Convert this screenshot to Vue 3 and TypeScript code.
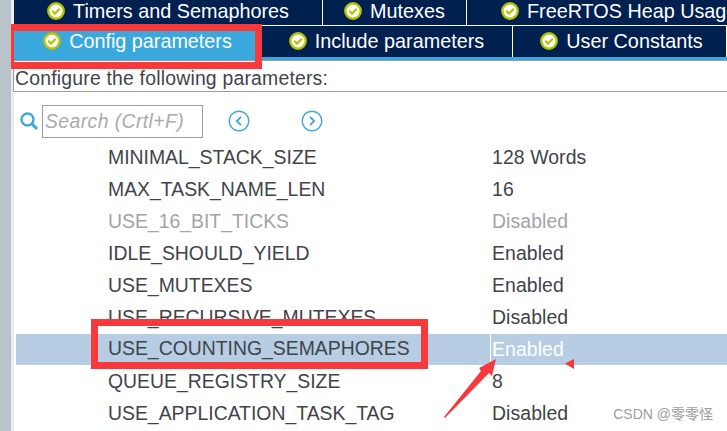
<template>
  <div class="page">
    <div class="content">
      <div class="tabs">
        <div v-for="(row, i) in tabRows" :key="i" class="tab-row" :class="'tab-row-' + i">
          <div
            v-for="tab in row"
            :key="tab.label"
            class="tab"
            :class="{ active: tab.active }"
            :style="{ width: tab.width + 'px' }"
          >
            <svg class="check" width="18" height="18" viewBox="0 0 18 18">
              <circle cx="9" cy="9" r="7.7" fill="#fff" stroke="#b4c400" stroke-width="2.4" />
              <path d="M5.2 8.8 8 11.6 12.8 6.8" fill="none" stroke="#b4c400" stroke-width="2.2" />
            </svg>
            <span class="tab-label">{{ tab.label }}</span>
          </div>
        </div>
      </div>
      <div class="tab-bar"></div>
      <div class="configure">Configure the following parameters:</div>
      <div class="search-row">
        <svg class="search-icon" width="20" height="20" viewBox="0 0 20 20">
          <circle cx="8.5" cy="8.5" r="6" fill="none" stroke="#3fa6d8" stroke-width="2.4" />
          <path d="M13 13 18 18" fill="none" stroke="#3fa6d8" stroke-width="3" />
        </svg>
        <div class="search-box">Search (Crtl+F)</div>
        <svg class="nav nav-prev" width="22" height="22" viewBox="0 0 22 22">
          <circle cx="11" cy="11" r="9.8" fill="none" stroke="#3fa6d8" stroke-width="1.4" />
          <path d="M13 6.8 8.8 11 13 15.2" fill="none" stroke="#3fa6d8" stroke-width="1.8" />
        </svg>
        <svg class="nav nav-next" width="22" height="22" viewBox="0 0 22 22">
          <circle cx="11" cy="11" r="9.8" fill="none" stroke="#3fa6d8" stroke-width="1.4" />
          <path d="M9 6.8 13.2 11 9 15.2" fill="none" stroke="#3fa6d8" stroke-width="1.8" />
        </svg>
      </div>
      <div class="params">
        <div
          v-for="p in params"
          :key="p.name"
          class="param"
          :class="{ muted: p.muted, selected: p.selected }"
        >
          <div class="param-name">{{ p.name }}</div>
          <div class="param-value">{{ p.value }}</div>
        </div>
      </div>
    </div>

    <!-- annotations drawn on top of the screenshot -->
    <div class="mark mark-tab"></div>
    <div class="mark mark-row"></div>
    <svg class="arrow" width="727" height="431" viewBox="0 0 727 431">
      <path d="M444 417 481 371 479 368 496 359 492 376 489 373 445 418Z" fill="#f8393c" />
      <path d="M565 363.500 574 359 574 369Z" fill="#f8393c" />
    </svg>
    <div class="watermark">CSDN @零零怪</div>
  </div>
</template>

<script setup lang="ts">
interface Tab {
  label: string
  width: number
  active?: boolean
}

interface Param {
  name: string
  value: string
  muted?: boolean
  selected?: boolean
}

const tabRows: Tab[][] = [
  [
    { label: 'Timers and Semaphores', width: 309 },
    { label: 'Mutexes', width: 144 },
    { label: 'FreeRTOS Heap Usage', width: 260 },
  ],
  [
    { label: 'Config parameters', width: 241, active: true },
    { label: 'Include parameters', width: 258 },
    { label: 'User Constants', width: 214 },
  ],
]

const params: Param[] = [
  { name: 'MINIMAL_STACK_SIZE', value: '128 Words' },
  { name: 'MAX_TASK_NAME_LEN', value: '16' },
  { name: 'USE_16_BIT_TICKS', value: 'Disabled', muted: true },
  { name: 'IDLE_SHOULD_YIELD', value: 'Enabled' },
  { name: 'USE_MUTEXES', value: 'Enabled' },
  { name: 'USE_RECURSIVE_MUTEXES', value: 'Disabled' },
  { name: 'USE_COUNTING_SEMAPHORES', value: 'Enabled', selected: true },
  { name: 'QUEUE_REGISTRY_SIZE', value: '8' },
  { name: 'USE_APPLICATION_TASK_TAG', value: 'Disabled' },
]
</script>

<style>
html,
body {
  margin: 0;
  background: #fff;
}
</style>

<style scoped>
.page {
  position: relative;
  width: 727px;
  height: 431px;
  overflow: hidden;
  background: #fff;
  font-family: 'Liberation Sans', Arial, sans-serif;
  color: #3f444b;
  box-sizing: border-box;
  border-left: 11px solid #b8c4ca;
}

.content {
  height: 100%;
  padding-left: 3px;
  box-sizing: border-box;
  box-shadow: inset 3px 0 0 #e9edef;
}

.tab-row {
  display: flex;
  background: #002050;
  color: #fff;
  font-size: 19.8px;
}

.tab-row-0 {
  height: 26px;
  border-bottom: 1px solid #fff;
  box-sizing: border-box;
}

.tab-row-0 .tab {
  padding-bottom: 3px;
}

.tab-row-1 {
  height: 31px;
}

.tab-row-1 .tab {
  padding-left: 6px;
  padding-bottom: 1px;
}

.tab-row-1 .tab:last-child {
  padding-left: 4px;
}

.tab {
  flex: none;
  display: flex;
  align-items: center;
  justify-content: center;
  gap: 8px;
  box-sizing: border-box;
  height: 100%;
  white-space: nowrap;
  overflow: hidden;
  border-right: 1px solid #fff;
}

.tab-row-0 .tab:last-child {
  justify-content: flex-start;
  padding-left: 34px;
  border-right: 0;
}

.tab.active {
  background: #3aa8dc;
  border-right: 0;
}

.check {
  flex: none;
}

.tab-bar {
  height: 4px;
  box-sizing: border-box;
  background: #3aa8dc;
  border-bottom: 1px solid #9a9da0;
}

.configure {
  height: 31px;
  margin-left: -1px;
  padding: 6px 0 0 1px;
  box-sizing: border-box;
  border-left: 1px solid #9a9da0;
  border-bottom: 1px solid #9a9da0;
  font-size: 19.4px;
  line-height: 22px;
  letter-spacing: 0.2px;
}

.search-row {
  display: flex;
  align-items: center;
  height: 50px;
  padding: 8px 0 0 5px;
  box-sizing: border-box;
}

.search-icon {
  flex: none;
}

.search-box {
  flex: none;
  width: 161px;
  height: 33px;
  margin-left: 3px;
  padding-left: 2px;
  box-sizing: border-box;
  border: 1px solid #9a9da0;
  color: #a9abae;
  font-size: 19.4px;
  letter-spacing: 0.4px;
  font-style: italic;
  line-height: 30px;
}

.nav-prev {
  margin-left: 25px;
}

.nav-next {
  margin-left: 51px;
}

.param {
  display: flex;
  height: 32px;
  align-items: center;
  margin-left: 2px;
  font-size: 19.4px;
}

.param-name {
  width: 476px;
  padding-left: 92px;
  box-sizing: border-box;
  white-space: nowrap;
  margin-top: -2px;
}

.param-value {
  height: 100%;
  line-height: 30px;
  letter-spacing: 0.1px;
}

.param.muted {
  color: #a2a4a7;
}

.param.selected {
  height: 31px;
  margin-bottom: 1px;
  background: #b7cde4;
}

.param.selected .param-value {
  color: #fff;
  border-left: 1px solid #fff;
  padding-left: 1px;
  margin-left: -2px;
}

.mark {
  position: absolute;
  box-sizing: border-box;
  border: 7px solid #f8393c;
}

.mark-tab {
  left: -4px;
  top: 24px;
  width: 255px;
  height: 45px;
}

.mark-row {
  left: 80px;
  top: 319px;
  width: 337px;
  height: 50px;
}

.arrow {
  position: absolute;
  left: -11px;
  top: 0;
}

.watermark {
  position: absolute;
  right: 14px;
  bottom: 8px;
  color: #9d9d9d;
  font-size: 14px;
  font-family: 'Liberation Sans', 'Noto Sans CJK SC', sans-serif;
}
</style>
